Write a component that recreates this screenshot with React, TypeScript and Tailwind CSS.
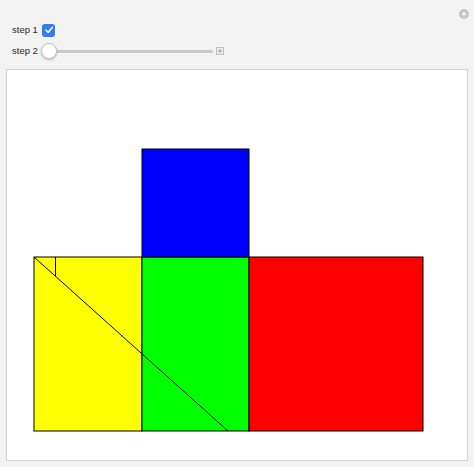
import React from "react";

export default function App() {
  return (
    <div className="w-[474px] h-[467px] bg-[#f3f3f3] relative" style={{ fontFamily: '"Liberation Sans", Arial, sans-serif' }}>
      <div className="absolute left-[459px] top-[9px] w-[10px] h-[10px] rounded-full bg-[#c4c4c4] flex items-center justify-center">
        <svg width="6" height="6" viewBox="0 0 6 6">
          <path d="M3 0.5V5.5M0.5 3H5.5" stroke="#f3f3f3" strokeWidth="1.3" />
        </svg>
      </div>
      <div className="pt-[22px] pl-[12px] flex flex-col gap-[5px]">
        <div className="h-[16px] flex items-center text-[9.5px] text-[#2a2a2a]">
          <span className="w-[30px]">step 1</span>
          <div className="w-[13px] h-[13px] rounded-[3px] bg-[#2f7ef6] flex items-center justify-center">
            <svg width="10" height="10" viewBox="0 0 10 10">
              <path d="M2 5.2L4.2 7.4L8.2 2.4" stroke="white" strokeWidth="1.6" fill="none" strokeLinecap="round" strokeLinejoin="round" />
            </svg>
          </div>
        </div>
        <div className="h-[16px] flex items-center text-[9.5px] text-[#2a2a2a]">
          <span className="w-[29px]">step 2</span>
          <div className="relative w-[172px] h-[16px] flex items-center">
            <div className="w-full h-[3px] rounded-full bg-[#c9c9c9]" />
            <div className="absolute left-[0px] top-[0px] w-[16px] h-[16px] rounded-full bg-white border border-[#c8c8c8] shadow-[0_1px_2px_rgba(0,0,0,0.25)]" />
          </div>
          <div className="ml-[3px] w-[8px] h-[8px] border border-[#bdbdbd] bg-[#ececec] flex items-center justify-center">
            <svg width="6" height="6" viewBox="0 0 6 6">
              <path d="M3 1V5M1 3H5" stroke="#a8a8a8" strokeWidth="1" />
            </svg>
          </div>
        </div>
      </div>
      <div className="mt-[10px] ml-[6px] w-[462px] h-[392px] bg-white border border-[#d2d2d2]">
        <svg width="460" height="390" viewBox="7 70 460 390">
          <rect x="34" y="257" width="108" height="174" fill="#ffff00" stroke="#000" strokeWidth="1" />
          <rect x="142" y="257" width="107" height="174" fill="#00ff00" stroke="#000" strokeWidth="1" />
          <rect x="249" y="257" width="174" height="174" fill="#ff0000" stroke="#000" strokeWidth="1" />
          <rect x="142" y="149" width="107" height="108" fill="#0000ff" stroke="#000" strokeWidth="1" />
          <line x1="34" y1="257" x2="228" y2="431" stroke="#000" strokeWidth="1" />
          <line x1="55.5" y1="257" x2="55.5" y2="276" stroke="#000" strokeWidth="1" />
        </svg>
      </div>
    </div>
  );
}
